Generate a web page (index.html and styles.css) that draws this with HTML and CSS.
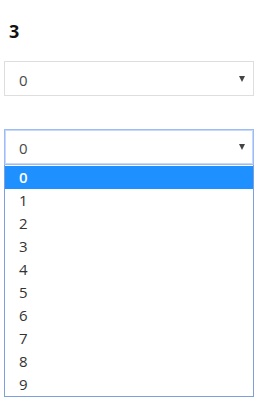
FILE: index.html
```html
<!DOCTYPE html>
<html lang="ko">
<head>
    <meta charset="UTF-8">
    <title>Select</title>
    <link rel="stylesheet" href="styles.css">
</head>
<body>
    <h3 class="title">3</h3>
    <div class="select">
        <span class="value">0</span>
        <span class="arrow"></span>
    </div>
    <div class="select open">
        <span class="value">0</span>
        <span class="arrow"></span>
    </div>
    <ul class="options">
        <li class="selected">0</li>
        <li>1</li>
        <li>2</li>
        <li>3</li>
        <li>4</li>
        <li>5</li>
        <li>6</li>
        <li>7</li>
        <li>8</li>
        <li>9</li>
    </ul>
</body>
</html>
```

FILE: styles.css
```css
body {
    font-family: "Open Sans", "Noto Sans", sans-serif;
    background-color: #fff;
    margin: 0;
    padding: 19px 12px 0 4px;
}

.title {
    margin: 0 0 18px 5px;
    font-size: 18px;
    line-height: 24px;
    font-weight: 700;
    color: #111;
}

.select {
    display: flex;
    justify-content: space-between;
    align-items: center;
    height: 35px;
    padding: 2px 8px 0 14px;
    border: 1px solid #dedede;
    box-sizing: border-box;
    font-size: 15px;
    color: #4a4a4a;
    background: #fff;
}

.select.open {
    margin-top: 33px;
    height: 36px;
    border: 1px solid #9dbcf5;
    box-shadow: inset 0 0 0 1px #c6d9fb;
}

.arrow {
    width: 0;
    height: 0;
    border-left: 3px solid transparent;
    border-right: 3px solid transparent;
    border-top: 6px solid #444;
    margin-bottom: 2px;
}

.options {
    list-style: none;
    margin: 0;
    padding: 1px 0 0 0;
    border: 1px solid #7d9fdb;
    border-top: none;
    width: 250px;
    box-sizing: border-box;
}

.options li {
    height: 23px;
    line-height: 23px;
    padding-left: 14px;
    font-size: 15px;
    color: #333;
}

.options li.selected {
    background-color: #1e90ff;
    color: #fff;
    font-weight: 600;
}
```
